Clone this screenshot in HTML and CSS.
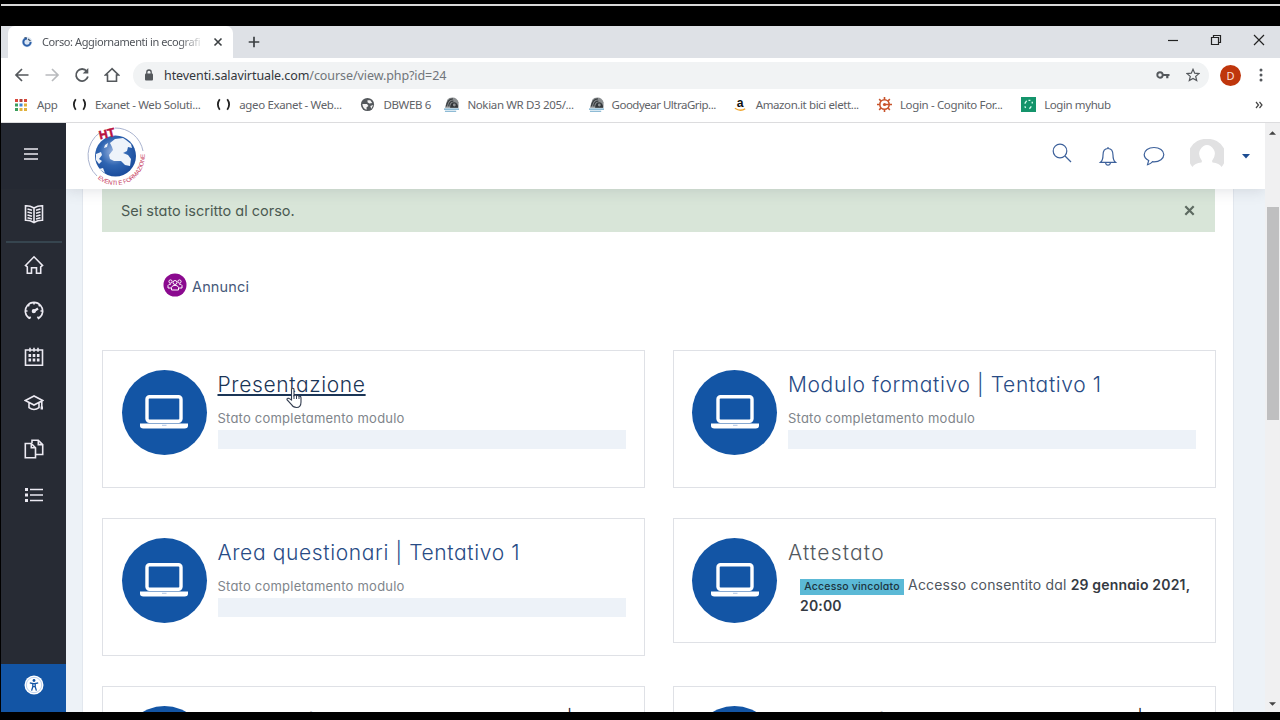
FILE: index.html
```html
<!DOCTYPE html>
<html lang="it">
<head>
    <meta charset="UTF-8">
    <meta name="viewport" content="width=device-width, initial-scale=1.0">
    <title>Corso: Aggiornamenti in ecografia</title>
    <link rel="stylesheet" href="styles.css">
</head>
<body>

    <!-- shared icons -->
    <svg width="0" height="0" class="defs">
        <symbol id="laptop" viewBox="0 0 50 34">
            <rect x="8" y="1.7" width="34" height="24.6" rx="2.5" fill="none" stroke="#fff" stroke-width="3.4"/>
            <path d="M1 28.6h48v2.2q0 2.7-3.4 2.7H4.4Q1 33.5 1 30.8z" fill="#fff"/>
            <path d="M23 30.3h4.5" stroke="#9db8dc" stroke-width=".8"/>
        </symbol>
        <symbol id="tyre" viewBox="0 0 16 16">
            <path d="M1 11.500L3.500 3Q5 .5 9 .5q5 0 6.500 5v6z" fill="#8b8f91"/>
            <path d="M2.500 10Q4 2 9.500 2M5 10q.5-5.500 5-5.500" fill="none" stroke="#3a3e41" stroke-width="1.300"/>
            <path d="M6.500 11.500q0-6 4.500-6 4 .5 4 6z" fill="#33373a"/>
            <circle cx="11" cy="8.500" r="1.500" fill="#8f9294"/>
            <path d="M0 13h16M1 15.200h12" stroke="#6aa5c8" stroke-width="1.3"/>
        </symbol>
    </svg>

    <div class="screen">
        <div class="top-line"></div>

        <div class="browser">
            <div class="tab-strip">
                <div class="tab">
                    <svg class="favicon" viewBox="0 0 12 12"><circle cx="6" cy="6" r="5.3" fill="#dbe6f4"/><path d="M6 2.500a3.600 3.600 0 1 0 3.600 3.600" fill="none" stroke="#2b5fa8" stroke-width="2"/><path d="M3.500 1.500l2 .5M7 3l2.500 2" stroke="#456" stroke-width="1.2"/></svg>
                    <span class="tab-title">Corso: Aggiornamenti in ecografi</span>
                    <svg class="tab-close" viewBox="0 0 10 10"><path d="M1.500 1.500l7 7M8.500 1.500l-7 7" stroke="#3c4043" stroke-width="1.6"/></svg>
                </div>
                <svg class="new-tab" viewBox="0 0 12 12"><path d="M6 .7v10.600M.7 6h10.600" stroke="#3c4043" stroke-width="1.7"/></svg>
                <div class="window-buttons">
                    <svg viewBox="0 0 12 12"><path d="M1 6.500h10" stroke="#222" stroke-width="1.2"/></svg>
                    <svg viewBox="0 0 12 12"><path d="M1.500 3.500h7v7h-7zM3.500 3.500v-2h7v7h-2" fill="none" stroke="#222" stroke-width="1.2"/></svg>
                    <svg viewBox="0 0 12 12"><path d="M1 1l10 10M11 1L1 11" stroke="#222" stroke-width="1.2"/></svg>
                </div>
            </div>

            <div class="toolbar">
                <div class="nav-buttons">
                    <svg viewBox="0 0 16 16"><path d="M14.500 8H2.500M8 2L2 8l6 6" fill="none" stroke="#54585c" stroke-width="1.7"/></svg>
                    <svg viewBox="0 0 16 16"><path d="M1.500 8h12M8 2l6 6-6 6" fill="none" stroke="#b9bbbe" stroke-width="1.7"/></svg>
                    <svg viewBox="0 0 16 16"><path d="M12.800 4.300A6 6 0 1 0 13.900 9.500" fill="none" stroke="#54585c" stroke-width="1.8"/><path d="M14.300 1v5.600H8.700z" fill="#54585c"/></svg>
                    <svg viewBox="0 0 16 16"><path d="M8 1.700L1.500 8h2v6.300h9V8h2z" fill="none" stroke="#54585c" stroke-width="1.6"/></svg>
                </div>
                <div class="address">
                    <svg class="lock" viewBox="0 0 10 12"><rect x="1" y="4.500" width="8" height="7" rx="1" fill="#54585c"/><path d="M2.800 5V3.200a2.200 2.200 0 0 1 4.400 0V5" fill="none" stroke="#54585c" stroke-width="1.3"/></svg>
                    <span class="url">hteventi.salavirtuale.com<span class="path">/course/view.php?id=24</span></span>
                    <svg class="key" viewBox="0 0 14 10"><circle cx="4" cy="5" r="2.700" fill="none" stroke="#54585c" stroke-width="1.9"/><path d="M6.500 5H13.500M11.300 5v3.200" fill="none" stroke="#54585c" stroke-width="2.2"/></svg>
                    <svg class="star" viewBox="0 0 14 14"><path d="M7 1.300l1.700 3.900 4.200.4-3.200 2.800 1 4.200L7 10.400l-3.700 2.200 1-4.200L1.100 5.600l4.200-.4z" fill="none" stroke="#54585c" stroke-width="1.2"/></svg>
                </div>
                <div class="profile">D</div>
                <svg class="dots" viewBox="0 0 4 14"><circle cx="2" cy="2" r="1.500" fill="#54585c"/><circle cx="2" cy="7" r="1.500" fill="#54585c"/><circle cx="2" cy="12" r="1.500" fill="#54585c"/></svg>
            </div>

            <div class="bookmarks">
                <div class="bookmark apps">
                    <svg viewBox="0 0 14 14"><path d="M1 2.500h3" stroke="#d9483b" stroke-width="3"/><path d="M5.500 2.500h3" stroke="#b0413a" stroke-width="3"/><path d="M10 2.500h3" stroke="#d9483b" stroke-width="3"/><path d="M1 7h3" stroke="#3a9d5d" stroke-width="3"/><path d="M5.500 7h3" stroke="#4285d4" stroke-width="3"/><path d="M10 7h3" stroke="#e0b13c" stroke-width="3"/><path d="M1 11.500h3" stroke="#3a9d5d" stroke-width="3"/><path d="M5.500 11.500h3M10 11.500h3" stroke="#e0b13c" stroke-width="3"/></svg>
                    <span>App</span>
                </div>
                <div class="bookmark">
                    <svg viewBox="0 0 16 16"><path d="M4 2.500q-4 5.500 0 11M12 2.500q4 5.500 0 11" fill="none" stroke="#222" stroke-width="1.9"/></svg>
                    <span>Exanet - Web Soluti...</span>
                </div>
                <div class="bookmark">
                    <svg viewBox="0 0 16 16"><path d="M4 2.500q-4 5.500 0 11M12 2.500q4 5.500 0 11" fill="none" stroke="#222" stroke-width="1.9"/></svg>
                    <span>ageo Exanet - Web...</span>
                </div>
                <div class="bookmark dbweb">
                    <svg viewBox="0 0 16 16"><circle cx="8" cy="8" r="7" fill="#54585c"/><path d="M2.500 7.500h5l1.500 2-2 1.500v2.500q-4-1-4.500-6zM8 3.500h3l2 3-3 .5-2-1.500zM11 9.500l3-1-2 4z" fill="#f4f4f4"/></svg>
                    <span>DBWEB 6</span>
                </div>
                <div class="bookmark">
                    <svg><use href="#tyre"/></svg>
                    <span>Nokian WR D3 205/...</span>
                </div>
                <div class="bookmark">
                    <svg><use href="#tyre"/></svg>
                    <span class="goodyear">Goodyear UltraGrip...</span>
                </div>
                <div class="bookmark">
                    <svg viewBox="0 0 16 16"><text x="4" y="11" class="amazon-a">a</text><path d="M2 12q6 4 11 .5" fill="none" stroke="#f0a52c" stroke-width="1.5"/></svg>
                    <span class="amazon">Amazon.it bici elett...</span>
                </div>
                <div class="bookmark">
                    <svg viewBox="0 0 16 16"><circle cx="8" cy="8" r="5" fill="none" stroke="#c8532b" stroke-width="1.7"/><path d="M8 0v3M8 13v3M0 8h3M2.300 2.300l2 2M13.700 2.300l-2 2M2.300 13.700l2-2M13.700 13.700l-2-2M7.500 8H16" stroke="#c8532b" stroke-width="1.7"/><circle cx="8" cy="8" r="1.700" fill="#c8532b"/></svg>
                    <span>Login - Cognito For...</span>
                </div>
                <div class="bookmark">
                    <svg viewBox="0 0 16 16"><path d="M0 0h16v16H0z" fill="#14946b"/><path d="M4 7l2-3M8 3.500h2M12 5v2M11 10l-2 2.500M4 10l1 1.500" stroke="#d8fff0" stroke-width="1.4"/></svg>
                    <span class="myhub">Login myhub</span>
                </div>
                <svg class="more" viewBox="0 0 8 8"><path d="M1 1l2.500 3L1 7M4.500 1L7 4 4.500 7" fill="none" stroke="#444" stroke-width="1.2"/></svg>
            </div>

            <div class="viewport">
                <nav class="sidebar">
                    <div class="menu-button">
                        <svg viewBox="0 0 16 14"><path d="M1 2h14M1 7h14M1 12h14"/></svg>
                    </div>
                    <div class="course-link">
                        <svg viewBox="0 0 20 20"><path d="M10 4Q6 1.500 1.500 1.700v14.500Q6 16 10 18.500q4-2.500 8.500-2.300V1.700Q14 1.500 10 4zM10 4v14M3.500 5l4.500 1.200M3.500 8L8 9.200M3.500 11L8 12.200M3.500 13.800L8 15M16.500 5L12 6.200M16.500 8L12 9.200M16.500 11L12 12.200M16.500 13.800L12 15"/></svg>
                    </div>
                    <div class="side-links">
                        <svg viewBox="0 0 20 20"><path d="M1.500 10.500L10 1.800l8.500 8.700-1.800 1.300v6.500h-4.200v-5.500h-5v5.500H3.300v-6.500z"/></svg>
                        <svg viewBox="0 0 20 20"><path d="M5.500 17.500a8.700 8.700 0 1 1 9 0l-1-1.800M5.500 17.500l1-1.800M10 1.500v2M1.500 10h2M16.500 10h2M4 4l1.300 1.300M16 4l-1.300 1.300"/><path d="M9.500 10.500L14 7.500" stroke-width="2.200"/><circle cx="9.800" cy="10.200" r="1.300" class="solid"/></svg>
                        <svg viewBox="0 0 20 20"><path d="M1.500 3h17v15.300h-17zM6 .8v4M10 .8v4M14 .8v4"/><path d="M4.500 8.500h2.600M8.700 8.500h2.600M12.900 8.500h2.600M4.500 13h2.600M8.700 13h2.600M12.900 13h2.600" stroke-width="3"/></svg>
                        <svg viewBox="0 0 20 20"><path d="M10 3L1.300 7.500 10 12l8.700-4.500zM5 9.700v5q5 3.500 10 0v-5M17.800 8v7"/><path d="M17.800 13.500v3" stroke-width="2.4"/></svg>
                        <svg viewBox="0 0 20 20"><path d="M1.300 4.500h6l4.200 4.300v9.900H1.300zM7.300 4.500v4.300h4.200M8 4V1.300h6.300l4.400 4.300v9.900h-6.500M14.300 1.300v4.300h4.400"/></svg>
                        <svg viewBox="0 0 20 20"><path d="M6 4.500h13M6 10h13M6 15.500h13"/><path d="M1 4.500h3M1 10h3M1 15.500h3" stroke-width="2.8"/></svg>
                    </div>
                    <div class="accessibility">
                        <svg viewBox="0 0 20 20"><circle cx="10" cy="10" r="9.500" fill="#fff"/><circle cx="10" cy="10" r="7.700" fill="none" stroke="#a9c3e6" stroke-width=".8"/><circle cx="10" cy="5.500" r="1.400" fill="#1355a5"/><path d="M5.800 7.800l3 .8v3l-1.200 4M14.200 7.800l-3 .8v3l1.200 4M8.800 8.600h2.400v3H8.800z" fill="none" stroke="#1355a5" stroke-width="1.3"/></svg>
                    </div>
                </nav>

                <main class="page">
                    <header class="site-header">
                        <svg class="logo" viewBox="0 0 60 60">
                            <defs>
                                <radialGradient id="sea" cx=".45" cy=".4" r=".6"><stop offset="0" stop-color="#9db6e0"/><stop offset=".55" stop-color="#2f65b2"/><stop offset="1" stop-color="#1b4d9c"/></radialGradient>
                                <path id="arc" d="M11.500 52.500A29 29 0 0 0 58.500 26"/>
                            </defs>
                            <path d="M11 50A28 28 0 0 1 14 6.500M29 2A28 28 0 0 1 57 25" fill="none" stroke="#a9b3cf" stroke-width="1"/>
                            <circle cx="29.500" cy="30" r="20.500" fill="url(#sea)"/>
                            <path d="M24 17l5-4 8-1 3 2 5 4 1 4-4-1-1 4-4 2 5 2 3 4-1 7-5-1-4-4-7 0-4-2-1-4 4-5-1-3z" fill="#eef3fa"/>
                            <path d="M10 28l5-2 1 3-3 4 3 2-3 3-3-4zM13 43l4-1 2 5zM22 17l-3 2-1 3 3-1z" fill="#eef3fa"/>
                            <text x="14" y="13.500" class="logo-ht" transform="rotate(-13 14 13)">HT</text>
                            <text class="logo-ring"><textPath href="#arc" textLength="67">EVENTI E FORMAZIONE</textPath></text>
                        </svg>
                        <div class="header-icons">
                            <svg class="search" viewBox="0 0 20 20"><circle cx="8" cy="8" r="6.800"/><path d="M13 13l6 6"/></svg>
                            <svg class="bell" viewBox="0 0 20 20"><path d="M2.500 16.300q2.500-2 2.500-7Q5 2.500 10 2.500t5 6.800q0 5 2.500 7zM7.500 16.500q.5 2.700 2.500 2.700t2.500-2.700M10 2.500V.9"/></svg>
                            <svg class="chat" viewBox="0 0 22 20"><path d="M5.500 18q-.5.600-1 .7l1.200-4.200Q1.200 12.300 1.200 8.600C1.200 4.500 5.500 1.500 11 1.500s9.800 3 9.800 7.100-4.300 7.200-9.800 7.200q-.7 0-1.400-.1-1.600 2-4.900 3z"/></svg>
                            <svg class="avatar" viewBox="0 0 34 34"><path d="M17 0a17 17 0 0 1 14.500 28q-2-4-9-4.500l-.5-1.500q4.500-6 2-11-3-5-7-5t-7 5q-2.500 5 2 11l-.5 1.500q-7 .5-9 4.500A17 17 0 0 1 17 0z"/></svg>
                            <svg class="caret" viewBox="0 0 8 5"><path d="M0 0h8L4 4.600z"/></svg>
                        </div>
                    </header>

                    <div class="content">
                        <div class="alert">
                            <span>Sei stato iscritto al corso.</span>
                            <svg class="dismiss" viewBox="0 0 10 10"><path d="M1.200 1.200l7.600 7.600M8.800 1.200L1.200 8.800" stroke="#5d6a61" stroke-width="2"/></svg>
                        </div>

                        <div class="forum">
                            <svg viewBox="0 0 24 24"><circle cx="12" cy="12" r="11.500" fill="#8b0a8f"/><g fill="none" stroke="#fff" stroke-width="1"><circle cx="12" cy="9.500" r="2"/><circle cx="7.500" cy="8.500" r="1.600"/><circle cx="16.500" cy="8.500" r="1.600"/><path d="M8.500 17v-2.500q.5-2.200 3.500-2.200t3.500 2.200V17zM8 15H5v-2.500Q5.500 11 8 11M16 15h3v-2.500Q18.500 11 16 11"/></g></svg>
                            <a>Annunci</a>
                        </div>

                        <div class="sections">
                            <section class="card">
                                <div class="badge"><svg><use href="#laptop"/></svg></div>
                                <div class="card-body">
                                    <h3 class="hovered">Presentazione<svg class="cursor" viewBox="0 0 16 22"><path d="M5.500 13V3q0-1.800 1.300-1.800T8 3v5.500q1.300-1.300 2.500.3 1.500-1 2.500.5 2-.5 2 1.700v4q0 5.500-4.500 5.500-3.500 0-5-3L1 12.700q-.3-2 2-1.300z" fill="#fff" stroke="#333d50" stroke-width="1.1"/><path d="M8 8v4M10.500 9v3M13 9.500V12" stroke="#333d50" stroke-width="1"/></svg></h3>
                                    <p class="status">Stato completamento modulo</p>
                                    <div class="progress"></div>
                                </div>
                            </section>
                            <section class="card">
                                <div class="badge"><svg><use href="#laptop"/></svg></div>
                                <div class="card-body">
                                    <h3>Modulo formativo | Tentativo 1</h3>
                                    <p class="status">Stato completamento modulo</p>
                                    <div class="progress"></div>
                                </div>
                            </section>
                            <section class="card">
                                <div class="badge"><svg><use href="#laptop"/></svg></div>
                                <div class="card-body">
                                    <h3>Area questionari | Tentativo 1</h3>
                                    <p class="status">Stato completamento modulo</p>
                                    <div class="progress"></div>
                                </div>
                            </section>
                            <section class="card restricted">
                                <div class="badge"><svg><use href="#laptop"/></svg></div>
                                <div class="card-body">
                                    <h3>Attestato</h3>
                                    <p class="availability"><span class="label">Accesso vincolato</span> Accesso consentito dal <b>29 gennaio 2021,<br>20:00</b></p>
                                </div>
                            </section>
                            <section class="card">
                                <div class="badge"><svg><use href="#laptop"/></svg></div>
                                <div class="card-body"><h3 class="dark">Modulo formativo e questionari |</h3></div>
                            </section>
                            <section class="card">
                                <div class="badge"><svg><use href="#laptop"/></svg></div>
                                <div class="card-body"><h3 class="dark">Modulo formativo e questionari |</h3></div>
                            </section>
                        </div>
                    </div>
                </main>

                <div class="scrollbar">
                    <svg viewBox="0 0 8 4"><path d="M0 4h8L4 0z" fill="#444"/></svg>
                    <div class="thumb"></div>
                    <svg viewBox="0 0 8 4"><path d="M0 0h8L4 4z" fill="#444"/></svg>
                </div>
            </div>
        </div>
    </div>

</body>
</html>
```
FILE: styles.css
```css
* {
    box-sizing: border-box;
}
body {
    margin: 0;
    background: #000;
    font-family: Inter, "Open Sans", sans-serif;
    font-feature-settings: "cv11";
}
svg {
    display: block;
    flex: none;
}
.defs {
    position: absolute;
}
.screen {
    width: 1280px;
    height: 720px;
    overflow: hidden;
    background: #000;
    padding: 4px 0 8px 1px;
}
.top-line {
    height: 2px;
    margin-bottom: 20px;
    background: #d8d8d8;
}
.browser {
    height: 686px;
    display: flex;
    flex-direction: column;
    background: #fff;
    font-family: "Noto Sans", "Open Sans", sans-serif;
    color: #5f6368;
}

/* tabs */
.tab-strip {
    height: 32px;
    display: flex;
    align-items: center;
    background: #dee1e6;
    padding-left: 7px;
}
.tab {
    width: 225px;
    height: 32px;
    display: flex;
    align-items: center;
    background: #fff;
    border-radius: 7px 7px 0 0;
    padding-left: 13px;
}
.favicon {
    width: 12px;
    height: 12px;
    margin-right: 9px;
}
.tab-title {
    width: 163px;
    padding-bottom: 1px;
    white-space: nowrap;
    font-size: 11px;
    letter-spacing: -0.4px;
    color: #50545a;
    -webkit-mask-image: linear-gradient(to right, #000 84%, transparent);
    mask-image: linear-gradient(to right, #000 84%, transparent);
}
.tab-close {
    width: 10px;
    height: 10px;
    margin-left: 8px;
}
.new-tab {
    width: 12px;
    height: 12px;
    margin-left: 15px;
}
.window-buttons {
    display: flex;
    gap: 31px;
    margin: -5px 15px 0 auto;
}
.window-buttons svg {
    width: 12px;
    height: 12px;
}

/* toolbar */
.toolbar {
    height: 35px;
    display: flex;
    align-items: center;
    padding: 0 0 1px 13px;
}
.nav-buttons {
    display: flex;
    gap: 14px;
    width: 119px;
}
.nav-buttons svg {
    width: 16px;
    height: 16px;
}
.address {
    width: 1076px;
    height: 27px;
    display: flex;
    align-items: center;
    background: #f1f3f4;
    border-radius: 14px;
    padding: 0 9px 0 11px;
}
.lock {
    width: 10px;
    height: 12px;
    margin-right: 10px;
}
.url {
    font-size: 12.5px;
    letter-spacing: -0.08px;
    color: #33373c;
}
.path {
    color: #70757a;
}
.key {
    width: 14px;
    height: 10px;
    margin-left: auto;
}
.star {
    width: 14px;
    height: 14px;
    margin-left: 16px;
}
.profile {
    width: 21px;
    height: 21px;
    margin-left: 11px;
    border-radius: 50%;
    background: #bf360c;
    color: #fbe0d8;
    font-size: 11px;
    line-height: 21px;
    text-align: center;
}
.dots {
    width: 4px;
    height: 14px;
    margin-left: 18px;
}

/* bookmarks */
.bookmarks {
    height: 30px;
    display: flex;
    align-items: center;
    padding: 0 17px 6px 13px;
    border-bottom: 1px solid #dcdcde;
}
.bookmark {
    width: 144.2px;
    display: flex;
    align-items: center;
    gap: 8px;
    font-size: 11.5px;
    letter-spacing: -0.35px;
    white-space: nowrap;
}
.bookmark svg {
    width: 15px;
    height: 15px;
}
.apps {
    width: 58px;
}
.apps svg {
    width: 14px;
    height: 14px;
    margin-right: 1px;
}
.dbweb {
    width: 84px;
}
.goodyear {
    letter-spacing: -0.5px;
}
.amazon,
.myhub {
    letter-spacing: -0.4px;
}
.amazon-a {
    font: bold 13px "Liberation Sans", sans-serif;
    fill: #111;
}
.more {
    width: 8px;
    height: 8px;
    margin-left: auto;
}

/* site */
.viewport {
    flex: 1;
    min-height: 0;
    display: flex;
    font-family: Inter, "Open Sans", sans-serif;
}
.sidebar {
    width: 65px;
    display: flex;
    flex-direction: column;
    align-items: center;
    background: #272b34;
}
.sidebar svg {
    width: 20px;
    height: 20px;
    fill: none;
    stroke: #eceaf2;
    stroke-width: 1.6;
}
.sidebar .solid {
    fill: #eceaf2;
}
.menu-button {
    width: 100%;
    height: 66px;
    padding: 24px 0 0 22px;
    background: #252933;
}
.sidebar .menu-button svg {
    width: 16px;
    height: 14px;
}
.course-link {
    width: 56px;
    height: 54px;
    display: flex;
    justify-content: center;
    padding-top: 15px;
    border-bottom: 2px solid #36454f;
}
.side-links {
    display: flex;
    flex-direction: column;
    gap: 26px;
    padding-top: 12px;
}
.accessibility {
    width: 100%;
    height: 48px;
    margin-top: auto;
    display: flex;
    justify-content: center;
    padding-top: 11px;
    background: #1355a5;
}
.sidebar .accessibility svg {
    stroke: none;
}
.page {
    width: 1199px;
    display: flex;
    flex-direction: column;
    background: #edf2f7;
    overflow: hidden;
}
.site-header {
    height: 66px;
    flex: none;
    display: flex;
    align-items: center;
    justify-content: space-between;
    padding: 0 15px 0 20px;
    background: #fff;
    box-shadow: 0 1px 14px rgba(60, 70, 90, 0.17);
    z-index: 1;
}
.logo {
    width: 60px;
    height: 60px;
    overflow: visible;
}
.logo-ht {
    font: bold 12px "Liberation Sans", sans-serif;
    fill: #b9123f;
    stroke: #b9123f;
    stroke-width: 0.5;
}
.logo-ring {
    font: 6px "Liberation Sans", sans-serif;
    fill: #c53358;
}
.header-icons {
    display: flex;
    align-items: center;
}
.header-icons svg {
    width: 20px;
    height: 20px;
    fill: none;
    stroke: #3d619b;
    stroke-width: 1.2;
}
.header-icons .search {
    margin: -6px 26px 0 0;
}
.header-icons .chat {
    width: 22px;
    margin: 0 25px;
}
.header-icons .avatar {
    width: 34px;
    height: 34px;
    fill: #e1e1e2;
    stroke: none;
}
.header-icons .caret {
    width: 8px;
    height: 5px;
    margin-left: 18px;
    fill: #1c4c92;
    stroke: none;
}
.content {
    width: 1152px;
    height: 524px;
    margin-left: 16px;
    padding: 0 19px;
    background: #fff;
    border: solid #e2e7ee;
    border-width: 0 1px;
}
.alert {
    width: 1113px;
    height: 43px;
    display: flex;
    align-items: center;
    justify-content: space-between;
    padding: 0 20px 0 19px;
    background: #d8e5d8;
    color: #4b5a52;
    font-size: 14.5px;
}
.dismiss {
    width: 11px;
    height: 11px;
}
.forum {
    height: 118px;
    display: flex;
    align-items: flex-start;
    gap: 5px;
    padding: 41px 0 0 61px;
    color: #46597a;
    font-size: 14.5px;
    letter-spacing: 0.15px;
    line-height: 27px;
}
.forum svg {
    width: 24px;
    height: 24px;
}
.sections {
    display: grid;
    grid-template-columns: 543px 543px;
    gap: 30px 27.5px;
    align-items: start;
}
.card {
    height: 138px;
    display: flex;
    gap: 11px;
    padding: 19px 18.5px;
    border: 1px solid #dfe1e6;
}
.restricted {
    height: 125px;
}
.badge {
    width: 85px;
    height: 85px;
    flex: none;
    display: flex;
    align-items: center;
    justify-content: center;
    border-radius: 50%;
    background: #1355a5;
}
.badge svg {
    width: 50px;
    height: 34px;
    margin-bottom: 2px;
}
.card-body {
    flex: 1;
}
.card h3 {
    margin: 0;
    font-size: 21px;
    font-weight: 300;
    line-height: 29px;
    letter-spacing: 0.63px;
    white-space: nowrap;
    color: #284b85;
}
.card .hovered {
    position: relative;
    width: max-content;
    color: #1b3556;
    text-decoration: underline;
    text-decoration-thickness: 2px;
    text-underline-offset: 2px;
}
.cursor {
    position: absolute;
    left: 68px;
    top: 17px;
    width: 16px;
    height: 22px;
}
.status {
    margin: 9px 0 2px;
    font-size: 13px;
    line-height: 20px;
    letter-spacing: 0.22px;
    color: #80858b;
}
.progress {
    width: 408px;
    height: 19px;
    background: #edf2f8;
}
.restricted h3 {
    letter-spacing: 1.2px;
    color: #525960;
}
.card .dark {
    letter-spacing: 1.2px;
    color: #1b2430;
}
.availability {
    margin: 7px 0 0 12px;
    font-size: 14px;
    line-height: 21px;
    letter-spacing: 0.17px;
    white-space: nowrap;
    color: #4f565e;
}
.availability b {
    font-weight: 600;
    color: #343a42;
}
.label {
    display: inline-block;
    width: 104px;
    height: 16px;
    background: #5bb9d6;
    color: #1d3440;
    font-size: 10.5px;
    font-weight: 500;
    line-height: 16px;
    text-align: center;
}

/* scrollbar */
.scrollbar {
    width: 15px;
    display: flex;
    flex-direction: column;
    align-items: center;
    padding: 8px 0 6px;
    background: #f0f0f1;
}
.scrollbar svg {
    width: 7px;
    height: 4px;
}
.thumb {
    width: 12px;
    height: 213px;
    margin: 72px 0 auto 1px;
    background: #bfbfc0;
}
```
